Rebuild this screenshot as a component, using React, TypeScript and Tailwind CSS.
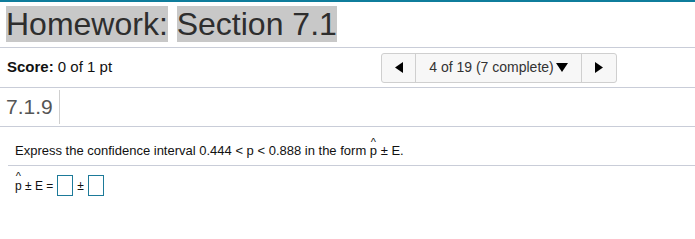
import React from "react";

function Hat({ children }: { children: React.ReactNode }) {
  return (
    <span className="relative inline-block">
      <span className="absolute left-1/2 top-[-6px] -translate-x-1/2 text-[11px] leading-none">^</span>
      {children}
    </span>
  );
}

function Tri({ dir }: { dir: "left" | "right" | "down" }) {
  const pts =
    dir === "left" ? "8,0 8,11 0,5.5" : dir === "right" ? "0,0 0,11 8,5.5" : "0,0 12,0 6,9";
  const w = dir === "down" ? 12 : 8;
  const h = dir === "down" ? 9 : 11;
  return (
    <svg width={w} height={h} viewBox={`0 0 ${w} ${h}`} className="block">
      <polygon points={pts} fill="#000" />
    </svg>
  );
}

export default function App() {
  return (
    <div className="w-[695px] bg-white font-['Liberation_Sans',Arial,sans-serif] text-[#222]">
      <div className="border-t-2 border-[#0f7d9c] border-b border-b-[#c9cdd8] px-[6px] pt-[4px] pb-[4px] leading-[37px]">
        <h1 className="text-[32px] text-[#2e2e2e]">
          <span className="bg-[#c8c8c8]">Homework:</span>{" "}
          <span className="bg-[#c8c8c8]">Section 7.1</span>
        </h1>
      </div>

      <div className="flex h-[40px] items-center border-b border-[#c9cdd8] pl-[7px]">
        <div className="text-[15px] text-[#111]">
          <span className="font-bold">Score:</span> 0 of 1 pt
        </div>
        <div className="ml-auto mr-[78px] flex h-[30px] overflow-hidden rounded-[3px] border border-[#cfcfcf] bg-[#f7f7f7]">
          <button type="button" className="flex w-[34px] items-center justify-center border-r border-[#cfcfcf]">
            <Tri dir="left" />
          </button>
          <button
            type="button"
            className="flex w-[166px] items-center justify-center gap-[2px] border-r border-[#cfcfcf] text-[14px] text-[#333]"
          >
            4 of 19 (7 complete)
            <Tri dir="down" />
          </button>
          <button type="button" className="flex w-[34px] items-center justify-center">
            <Tri dir="right" />
          </button>
        </div>
      </div>

      <div className="flex h-[39px] border-b border-[#c9cdd8]">
        <div className="my-[2px] flex w-[60px] items-center border-r border-[#cfcfcf] pl-[6px] text-[21px] text-[#555]">
          7.1.9
        </div>
      </div>

      <div className="pl-[8px]">
        <div className="border-b border-[#c9cdd8] pl-[7px] pt-[16px] pb-[7px] text-[13px] leading-[15px] text-[#111]">
          Express the confidence interval 0.444 &lt; p &lt; 0.888 in the form <Hat>p</Hat> ± E.
        </div>
        <div className="flex items-center gap-[4px] pl-[7px] pt-[9px] text-[12px] text-[#111]">
          <span>
            <Hat>p</Hat> ± E =
          </span>
          <span className="inline-block h-[21px] w-[16px] border-[1.5px] border-[#1d7a99]" />
          <span>±</span>
          <span className="inline-block h-[21px] w-[16px] border-[1.5px] border-[#1d7a99]" />
        </div>
      </div>
    </div>
  );
}
